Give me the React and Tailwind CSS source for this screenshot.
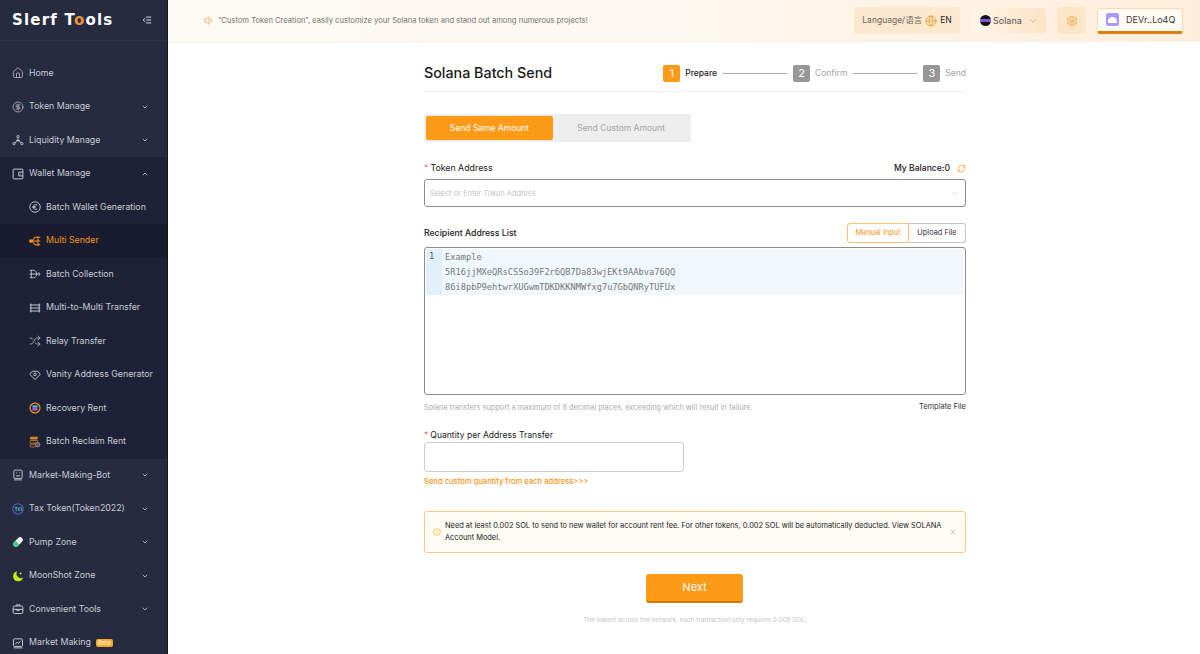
import { ChevronDown, ChevronUp, Globe, Settings, RefreshCw, X, Info, Home, CircleDollarSign, Shuffle, IndentDecrease, Volume1 } from "lucide-react";

const NetworkIcon = ({ className }) => (
  <svg viewBox="0 0 16 16" fill="none" stroke="currentColor" strokeWidth="1.2" className={className}>
    <circle cx="8" cy="3.5" r="1.5" />
    <circle cx="2.8" cy="12.8" r="1.5" />
    <circle cx="13.2" cy="12.8" r="1.5" />
    <path d="M8 5v3.5M8 8.5l-4 3.2M8 8.5l4 3.2M5.5 8.5h5" />
  </svg>
);

const WalletIcon = ({ className }) => (
  <svg viewBox="0 0 16 16" fill="none" stroke="currentColor" strokeWidth="1.3" className={className}>
    <rect x="1.5" y="1.5" width="13" height="13" rx="0.8" />
    <path d="M14.5 5.5H9v5h5.5M11 8h1" />
  </svg>
);

const EuroIcon = ({ className }) => (
  <svg viewBox="0 0 16 16" fill="none" stroke="currentColor" strokeWidth="1.2" className={className}>
    <circle cx="8" cy="8" r="7" />
    <path d="M10.8 5.4A3 3 0 0 0 6 8a3 3 0 0 0 4.8 2.6M4.4 7.2h4.4M4.4 8.9h4.4" />
  </svg>
);

const SenderIcon = ({ className }) => (
  <svg viewBox="0 0 16 16" fill="none" stroke="currentColor" strokeWidth="1.4" className={className}>
    <circle cx="2.5" cy="8" r="1.6" fill="currentColor" />
    <path d="M4 8l4-5h7M4 8h11M4 8l4 5h7M12 1.5v13" />
  </svg>
);

const CollectIcon = ({ className }) => (
  <svg viewBox="0 0 16 16" fill="none" stroke="currentColor" strokeWidth="1.2" className={className}>
    <path d="M1 3h5c3 0 4 3 4 5s-1 5-4 5H1M3 3v10M1 8h9" />
    <circle cx="13" cy="8" r="1.5" />
  </svg>
);

const GridIcon = ({ className }) => (
  <svg viewBox="0 0 16 16" fill="none" stroke="currentColor" strokeWidth="1.3" className={className}>
    <path d="M2.5 2v12M13.5 2v12M1 4h14M1 8h14M1 12h14" />
  </svg>
);

const VanityIcon = ({ className }) => (
  <svg viewBox="0 0 16 16" fill="none" stroke="currentColor" strokeWidth="1.2" className={className}>
    <path d="M4.2 3h7.6L15 7.2 8 14 1 7.2z" strokeLinejoin="round" />
    <circle cx="8" cy="7.2" r="1.8" />
  </svg>
);

const RecoveryIcon = ({ className }) => (
  <svg viewBox="0 0 16 16" className={className}>
    <circle cx="8" cy="8" r="6.6" fill="#1d2236" stroke="#e0a21c" strokeWidth="1.6" />
    <rect x="4.6" y="4.6" width="6.8" height="2.4" fill="#3dd6b5" />
    <rect x="4.6" y="7" width="6.8" height="2.2" fill="#8a6cf0" />
    <rect x="4.6" y="9.2" width="6.8" height="2.2" fill="#d94fd0" />
  </svg>
);

const ReclaimIcon = ({ className }) => (
  <svg viewBox="0 0 16 16" fill="none" className={className}>
    <rect x="1.5" y="1" width="10" height="3.6" rx="0.8" fill="#d98a1f" />
    <rect x="1.5" y="6" width="10" height="3.6" rx="0.8" stroke="#d98a1f" />
    <rect x="1.5" y="11" width="8" height="3.6" rx="0.8" stroke="#d98a1f" />
    <circle cx="11.5" cy="11.5" r="3" fill="#3c5bd6" stroke="#d98a1f" />
  </svg>
);

const BotIcon = ({ className }) => (
  <svg viewBox="0 0 16 16" fill="none" stroke="currentColor" strokeWidth="1.2" className={className}>
    <rect x="2.5" y="1.5" width="11" height="11" rx="1" />
    <path d="M2.5 14.5h11M5.5 5h1M9.5 5h1M5.5 9h5" />
  </svg>
);

const TaxIcon = ({ className }) => (
  <svg viewBox="0 0 16 16" className={className}>
    <circle cx="8" cy="8" r="7" fill="#23304a" stroke="#5c5fd6" strokeWidth="1.4" />
    <path d="M4 6h3M5.5 6v4.4M8 6l2 4.4M10 6l-2 4.4M11 6h1.5v4.4" stroke="#5ee0c8" strokeWidth="0.9" fill="none" />
  </svg>
);

const PillIcon = ({ className }) => (
  <svg viewBox="0 0 16 16" className={className}>
    <g transform="rotate(-45 8 8)">
      <rect x="0.5" y="4.4" width="15" height="7.2" rx="3.6" fill="#f5f6f7" />
      <path d="M4.1 4.4H7v7.2H4.1a3.6 3.6 0 0 1 0-7.2z" fill="#3fd08f" />
    </g>
  </svg>
);

const MoonIcon = ({ className }) => (
  <svg viewBox="0 0 16 16" className={className}>
    <path d="M7 1.5a6.8 6.8 0 1 0 7.8 8.6A6 6 0 0 1 7 1.5z" fill="#c6ea1e" />
    <path d="M11.5 2.5l.6 1.5 1.5.6-1.5.6-.6 1.5-.6-1.5-1.5-.6 1.5-.6z" fill="#c6ea1e" />
  </svg>
);

const ToolsIcon = ({ className }) => (
  <svg viewBox="0 0 16 16" fill="none" stroke="currentColor" strokeWidth="1.3" className={className}>
    <rect x="1.5" y="4" width="13" height="10" rx="2" />
    <path d="M5.5 4V2.5h5V4M1.5 8.5h13M6.5 8.5v1.5h3V8.5" />
  </svg>
);

const ChartIcon = ({ className }) => (
  <svg viewBox="0 0 16 16" fill="none" stroke="currentColor" strokeWidth="1.3" className={className}>
    <rect x="2" y="2.5" width="12" height="10" rx="1.2" />
    <path d="M4.5 9.5l2.2-2.6 2 1.6 2.8-3.2M2 14.5h12" />
  </svg>
);

const menuItems = [
  { label: "Home", icon: Home },
  { label: "Token Manage", icon: CircleDollarSign, arrow: "down" },
  { label: "Liquidity Manage", icon: NetworkIcon, arrow: "down" },
  { label: "Wallet Manage", icon: WalletIcon, arrow: "up", group: true },
  { label: "Batch Wallet Generation", icon: EuroIcon, sub: true },
  { label: "Multi Sender", icon: SenderIcon, sub: true, active: true },
  { label: "Batch Collection", icon: CollectIcon, sub: true },
  { label: "Multi-to-Multi Transfer", icon: GridIcon, sub: true },
  { label: "Relay Transfer", icon: Shuffle, sub: true },
  { label: "Vanity Address Generator", icon: VanityIcon, sub: true },
  { label: "Recovery Rent", icon: RecoveryIcon, sub: true },
  { label: "Batch Reclaim Rent", icon: ReclaimIcon, sub: true },
  { label: "Market-Making-Bot", icon: BotIcon, arrow: "down" },
  { label: "Tax Token(Token2022)", icon: TaxIcon, arrow: "down" },
  { label: "Pump Zone", icon: PillIcon, arrow: "down" },
  { label: "MoonShot Zone", icon: MoonIcon, arrow: "down" },
  { label: "Convenient Tools", icon: ToolsIcon, arrow: "down" },
  { label: "Market Making", icon: ChartIcon, beta: true },
];

function MenuRow({ item }) {
  const Icon = item.icon;
  const highlighted = item.group || item.sub;
  return (
    <div
      className={`flex h-[33.5px] shrink-0 items-center pr-[18px] ${item.sub ? "pl-[29px]" : "pl-[12px]"} ${
        item.active ? "bg-[#191c2e] text-[#f7931a]" : "text-[#c9ccd4]"
      } ${highlighted && !item.active ? "bg-[#1e2236]" : ""}`}
    >
      <Icon className="h-[12px] w-[12px] shrink-0" strokeWidth={1.4} />
      <span className="ml-[5px] whitespace-nowrap text-[8.8px] leading-none">{item.label}</span>
      {item.beta ? (
        <span className="ml-[5px] rounded-[2px] bg-[#f7a823] px-[2px] text-[6px] leading-[8px] text-white">Beta</span>
      ) : null}
      {item.arrow === "down" ? <ChevronDown className="ml-auto h-[8px] w-[8px]" strokeWidth={2.4} /> : null}
      {item.arrow === "up" ? <ChevronUp className="ml-auto h-[8px] w-[8px]" strokeWidth={2.4} /> : null}
    </div>
  );
}

function Sidebar() {
  return (
    <aside className="flex h-[654px] w-[168px] shrink-0 flex-col overflow-hidden border-r border-[#14161f] bg-[#262b40]">
      <div className="flex h-[41px] shrink-0 items-center justify-between border-b border-[#2d3248] pl-[12px] pr-[15px]">
        <span className="font-['DejaVu_Sans'] text-[15px] font-bold leading-none tracking-[1.2px] text-white">
          Slerf T<span className="text-[#e8913a]">o</span>ols
        </span>
        <IndentDecrease className="h-[10px] w-[10px] text-white" strokeWidth={2} />
      </div>
      <div className="flex flex-col pt-[15.5px]">
        {menuItems.map((item) => (
          <MenuRow key={item.label} item={item} />
        ))}
      </div>
    </aside>
  );
}

function TopBar() {
  return (
    <header className="flex h-[42px] shrink-0 items-center border-b border-[#f5f0e8] bg-gradient-to-r from-[#fdfaf5] via-[#fdf8ef] to-[#feeedb] pl-[36px] pr-[17px]">
      <Volume1 className="h-[11px] w-[11px] text-[#f9a03f]" strokeWidth={1.8} />
      <span className="ml-[3px] whitespace-nowrap text-[7.6px] text-[#77736d]">
        “Custom Token Creation”, easily customize your Solana token and stand out among numerous projects!
      </span>
      <div className="ml-auto flex items-center">
        <div className="flex h-[27px] w-[106px] items-center justify-center rounded-[3px] bg-[#fde9d0] text-[8.5px] text-[#6b645c]">
          Language/语言
          <Globe className="ml-[3px] h-[12px] w-[12px] text-[#f7931a]" strokeWidth={1.6} />
          <span className="ml-[3px] text-[#222]">EN</span>
        </div>
        <div className="ml-[11px] flex h-[25px] w-[75px] items-center rounded-[3px] bg-gradient-to-r from-[#fef6ea] to-[#fde3c4] pl-[9px] text-[9px] text-[#57534e]">
          <span className="h-[11px] w-[11px] rounded-full bg-[linear-gradient(#111_0_35%,#8a4fe0_35%_65%,#111_65%)]" />
          <span className="ml-[2px]">Solana</span>
          <ChevronDown className="ml-[6px] h-[10px] w-[10px] text-[#9a8f82]" strokeWidth={1.4} />
        </div>
        <div className="ml-[11px] flex h-[27px] w-[29px] items-center justify-center rounded-[3px] bg-[#fde5c8]">
          <Settings className="h-[12px] w-[12px] text-[#f7931a]" strokeWidth={1.6} />
        </div>
        <div className="ml-[11px] flex h-[26px] w-[86px] items-center rounded-[3px] border border-[#fbd9ae] border-b-[3px] border-b-[#e07f0c] bg-[#fffaf4] pl-[8px] text-[9px] text-[#3b3835]">
          <span className="flex h-[13px] w-[13px] items-center justify-center rounded-[2px] bg-[#a99af5]">
            <span className="h-[6px] w-[9px] rounded-t-full bg-white" />
          </span>
          <span className="ml-[7px]">DEVr..Lo4Q</span>
        </div>
      </div>
    </header>
  );
}

function Step({ num, label, active }) {
  return (
    <div className="flex items-center">
      <span
        className={`flex h-[17px] w-[17px] items-center justify-center rounded-[2px] text-[11px] text-white ${
          active ? "bg-[#fd9a16]" : "bg-[#979797]"
        }`}
      >
        {num}
      </span>
      <span className={`ml-[5px] text-[8.5px] ${active ? "font-medium text-[#222]" : "text-[#a3a3a3]"}`}>{label}</span>
    </div>
  );
}

function BatchForm() {
  return (
    <div className="ml-[256px] w-[542px]">
      <div className="flex h-[42px] items-center justify-between border-b border-[#f0f0f0] pt-[5px]">
        <h1 className="text-[14.3px] font-medium text-[#1a1a1a]">Solana Batch Send</h1>
        <div className="flex items-center">
          <Step num="1" label="Prepare" active />
          <span className="mx-[6px] h-px w-[64px] bg-[#aaa]" />
          <Step num="2" label="Confirm" />
          <span className="mx-[6px] h-px w-[64px] bg-[#aaa]" />
          <Step num="3" label="Send" />
        </div>
      </div>

      <div className="mt-[22px] flex h-[28px] w-[267px] rounded-[3px] bg-[#eeeeee] p-[2px] text-[8.5px]">
        <button type="button" className="w-[127px] rounded-[2px] bg-[#fd9a16] text-white">
          Send Same Amount
        </button>
        <button type="button" className="flex-1 text-[#a3a3a3]">
          Send Custom Amount
        </button>
      </div>

      <div className="mt-[20px] flex h-[12px] items-center justify-between text-[8.6px] text-[#1a1a1a]">
        <span className="text-[8.8px]">
          <span className="mr-[2px] text-[#f26a6a]">*</span>Token Address
        </span>
        <span className="flex items-center font-medium">
          My Balance:0
          <RefreshCw className="ml-[7px] h-[9px] w-[9px] text-[#f7931a]" strokeWidth={1.8} />
        </span>
      </div>
      <div className="mt-[5px] flex h-[28px] items-center justify-between rounded-[3px] border border-[#8c8c8c] px-[5px] pt-px text-[7.4px] text-[#c4c4c4]">
        Select or Enter Token Address
        <ChevronDown className="h-[9px] w-[9px] text-[#bbb]" strokeWidth={1.4} />
      </div>

      <div className="mt-[16px] flex h-[20px] items-center justify-between">
        <span className="mt-[2px] text-[8.7px] font-medium text-[#1a1a1a]">Recipient Address List</span>
        <div className="flex h-[20px] text-[7.4px]">
          <span className="flex w-[62px] items-center justify-center rounded-l-[3px] border border-[#fbbf78] text-[#f7931a]">
            Manual Input
          </span>
          <span className="flex w-[57px] items-center justify-center rounded-r-[3px] border border-l-0 border-[#c4c4c4] text-[#333]">
            Upload File
          </span>
        </div>
      </div>
      <div className="mt-[4px] h-[148px] rounded-[3px] border border-[#8c8c8c] p-px">
        <div className="flex h-[46px] bg-[#f0f8fe] font-['DejaVu_Sans_Mono'] text-[8.7px] leading-[15px] text-[#777]">
          <div className="w-[16px] bg-[#e2f0fc] pl-[3px] text-[#555]">1</div>
          <div className="pl-[3px] pt-[1px]">
            <div>Example</div>
            <div>5R16jjMXeQRsCSSo39F2r6QB7Da83wjEKt9AAbva76QQ</div>
            <div>86i8pbP9ehtwrXUGwmTDKDKKNMWfxg7u7GbQNRyTUFUx</div>
          </div>
        </div>
      </div>
      <div className="mt-[7px] flex h-[10px] items-center justify-between">
        <span className="text-[7.35px] text-[#ababab]">Solana transfers support a maximum of 8 decimal places, exceeding which will result in failure.</span>
        <span className="text-[7.5px] text-[#333]">Template File</span>
      </div>

      <div className="mt-[17px] h-[12px] text-[8.6px] leading-[12px] text-[#222]">
        <span className="mr-[2px] text-[#f26a6a]">*</span>Quantity per Address Transfer
      </div>
      <div className="mt-px h-[30px] w-[260px] rounded-[3px] border border-[#cccccc]" />
      <div className="mt-[5px] h-[10px] text-[7.6px] font-medium leading-[10px] text-[#f7931a]">Send custom quantity from each address&gt;&gt;&gt;</div>

      <div className="mt-[24px] flex h-[42px] items-center rounded-[3px] border border-[#fbc987] bg-[#fffbf5] pl-[8px] pr-[8px] text-[7.4px] leading-[12.5px] text-[#222]">
        <Info className="h-[8px] w-[8px] shrink-0 text-[#f7a823]" strokeWidth={2} />
        <p className="ml-[4px] flex-1">
          Need at least 0.002 SOL to send to new wallet for account rent fee. For other tokens, 0.002 SOL will be automatically deducted. View SOLANA Account Model.
        </p>
        <X className="ml-[4px] h-[8px] w-[8px] shrink-0 text-[#999]" strokeWidth={1.6} />
      </div>

      <button
        type="button"
        className="ml-[222px] mt-[21px] block h-[29px] w-[97px] rounded-[3px] border-b-2 border-[#d9780b] bg-[#fd9a16] text-[11px] text-white"
      >
        Next
      </button>
      <p className="mt-[13px] text-center text-[6.4px] text-[#c4c4c4]">
        The lowest across the network, each transaction only requires 0.008 SOL.
      </p>
    </div>
  );
}

export default function App() {
  return (
    <div className="flex h-[654px] w-[1200px] overflow-hidden bg-white font-['Inter','Noto_Sans_CJK_SC',sans-serif]">
      <Sidebar />
      <div className="flex min-w-0 flex-1 flex-col">
        <TopBar />
        <main className="flex-1 pt-[8px]">
          <BatchForm />
        </main>
      </div>
    </div>
  );
}
